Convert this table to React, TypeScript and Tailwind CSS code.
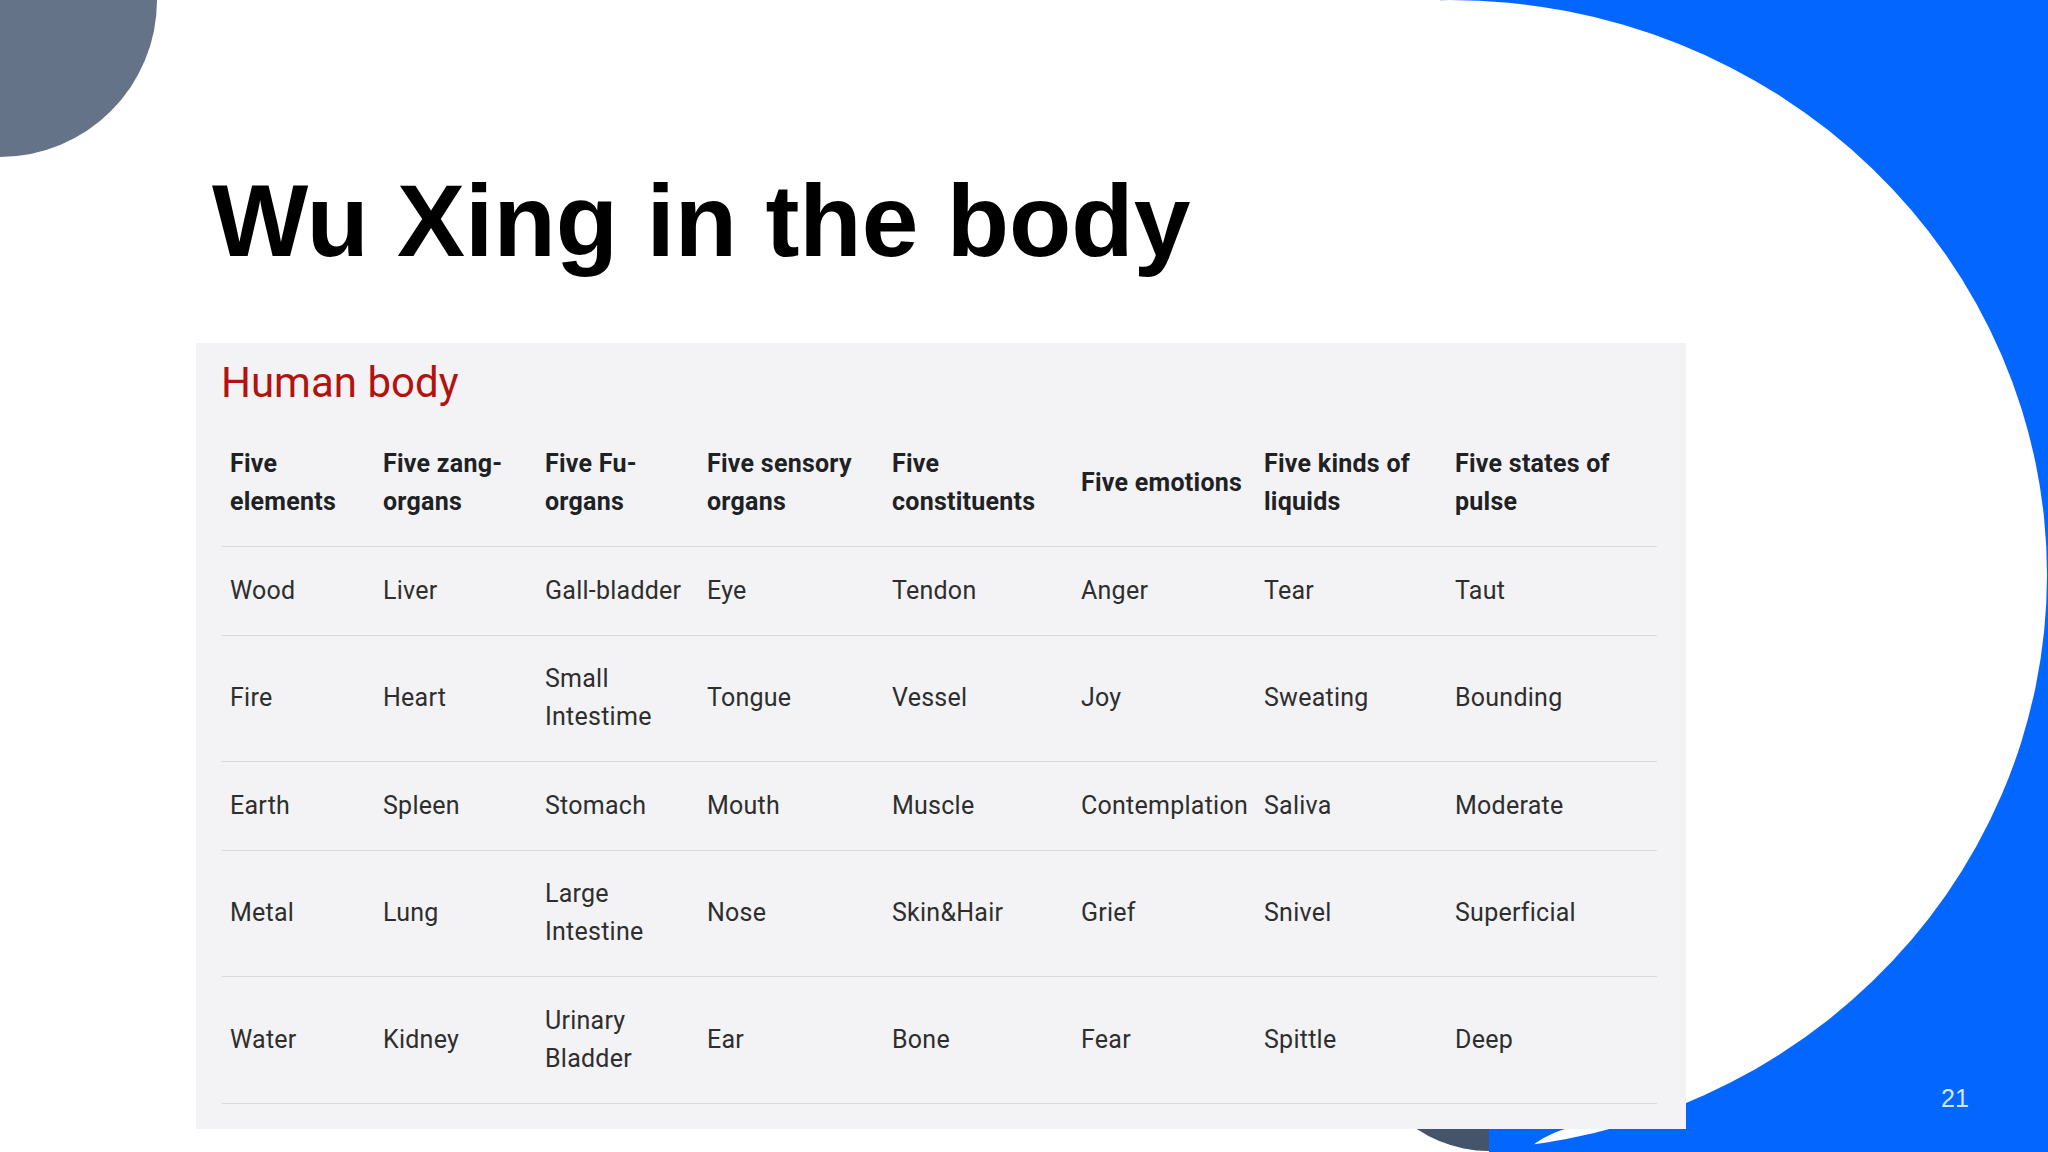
import React from "react";

// slide decoration: grey discs, blue band, white oval biting into the band
function Backdrop() {
  return (
    <svg className="absolute inset-0" width={2048} height={1152} viewBox="0 0 2048 1152">
      <circle cx={0} cy={0} r={157} fill="#647387" />
      <path d="M1440,0 H2048 V1152 H1489 V1080 H1440 Z" fill="#0366fe" />
      <ellipse cx={1450} cy={575} rx={597} ry={575} fill="#ffffff" />
      <path d="M1489,891 A130,130 0 0 0 1489,1151 Z" fill="#44546a" />
      <path d="M1489,1129 L1565,1129 C1552,1133 1541,1139 1533,1145 L1533,1152 L1489,1152 Z" fill="#0366fe" />
    </svg>
  );
}

const cols = [153, 162, 162, 185, 189, 183, 191, 210];

const headers = [
  "Five elements",
  "Five zang-organs",
  "Five Fu-organs",
  "Five sensory organs",
  "Five constituents",
  "Five emotions",
  "Five kinds of liquids",
  "Five states of pulse",
];

const rows = [
  ["Wood", "Liver", "Gall-bladder", "Eye", "Tendon", "Anger", "Tear", "Taut"],
  ["Fire", "Heart", "Small Intestime", "Tongue", "Vessel", "Joy", "Sweating", "Bounding"],
  ["Earth", "Spleen", "Stomach", "Mouth", "Muscle", "Contemplation", "Saliva", "Moderate"],
  ["Metal", "Lung", "Large Intestine", "Nose", "Skin&Hair", "Grief", "Snivel", "Superficial"],
  ["Water", "Kidney", "Urinary Bladder", "Ear", "Bone", "Fear", "Spittle", "Deep"],
];

export default function App() {
  return (
    <div className="relative w-[2048px] h-[1152px] overflow-hidden bg-white">
      <Backdrop />

      <div className="relative flex flex-col pl-[196px] pt-[170px]">
        <h1 className="ml-[16px] text-[102px] leading-none font-bold text-black font-['Liberation_Sans',Arial,sans-serif]">
          Wu Xing in the body
        </h1>

        <div className="mt-[71px] w-[1490px] bg-[#f3f3f5] pl-[26px] pr-[29px] pt-[14px] pb-[25px] font-['Roboto',sans-serif]">
          <h2 className="ml-[-1px] text-[42px] leading-[52px] text-[#b3130f]">Human body</h2>

          <table className="mt-[11px] w-[1435px] table-fixed border-collapse text-[25px] leading-[38px] tracking-[0.25px]">
            <colgroup>
              {cols.map((w, i) => (
                <col key={i} style={{ width: w }} />
              ))}
            </colgroup>
            <thead>
              <tr className="border-b border-[#d9d9dc]">
                {headers.map((h) => (
                  <th key={h} className="px-2 py-[25px] text-left align-middle font-bold text-[#202124]">
                    {h}
                  </th>
                ))}
              </tr>
            </thead>
            <tbody>
              {rows.map((r) => (
                <tr key={r[0]} className="border-b border-[#d9d9dc]">
                  {r.map((c, i) => (
                    <td key={i} className="px-2 py-[24.75px] align-middle text-[#2e2e2e]">
                      {c}
                    </td>
                  ))}
                </tr>
              ))}
            </tbody>
          </table>
        </div>
      </div>

      <div className="absolute left-[1941px] top-[1086px] text-[25px] leading-none text-[#d6e4ff] font-['Liberation_Sans',Arial,sans-serif]">
        21
      </div>
    </div>
  );
}
